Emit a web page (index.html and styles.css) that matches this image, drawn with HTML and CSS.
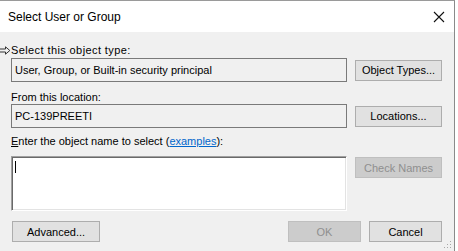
FILE: index.html
```html
<!DOCTYPE html>
<html>
<head>
<meta charset="utf-8">
<link rel="stylesheet" href="styles.css">
</head>
<body>
<div class="window">
  <div class="titlebar">
    <span class="title">Select User or Group</span>
    <svg class="close" width="12" height="12" viewBox="0 0 12 12"><path d="M1 1 L11 11 M11 1 L1 11" stroke="#111" stroke-width="1.1" fill="none"/></svg>
  </div>
  <div class="content">
    <div class="label first">
      <svg class="arrow" width="11" height="9" viewBox="0 0 11 9"><path d="M0 3 H5.5 V0.8 L9.8 4.5 L5.5 8.2 V6 H0" stroke="#333" stroke-width="1" fill="none"/></svg>
      <span class="wide">Select this object type:</span>
    </div>
    <div class="row center">
      <div class="field">User, Group, or Built-in security principal</div>
      <button class="btn">Object Types...</button>
    </div>
    <div class="label">From this location:</div>
    <div class="row center">
      <div class="field">PC-139PREETI</div>
      <button class="btn">Locations...</button>
    </div>
    <div class="label third"><u>E</u>nter the object name to select (<a class="link" href="#">examples</a>):</div>
    <div class="row top">
      <div class="textarea"><span class="caret"></span></div>
      <button class="btn disabled">Check Names</button>
    </div>
    <div class="footer">
      <button class="btn adv">Advanced...</button>
      <div class="spacer"></div>
      <button class="btn small disabled">OK</button>
      <button class="btn small">Cancel</button>
    </div>
  </div>
  <svg class="grip" width="8" height="8" viewBox="0 0 8 8">
    <rect x="6" y="0" width="1" height="1" fill="#a8a8a8"/>
    <rect x="3" y="3" width="1" height="1" fill="#a8a8a8"/>
    <rect x="6" y="3" width="1" height="1" fill="#a8a8a8"/>
    <rect x="0" y="6" width="1" height="1" fill="#a8a8a8"/>
    <rect x="3" y="6" width="1" height="1" fill="#a8a8a8"/>
    <rect x="6" y="6" width="1" height="1" fill="#a8a8a8"/>
  </svg>
</div>
</body>
</html>
```
FILE: styles.css
```css
html, body {
  margin: 0;
  padding: 0;
  background: #ffffff;
}
body {
  width: 458px;
  height: 251px;
  overflow: hidden;
  font-family: "Liberation Sans", Arial, sans-serif;
  font-size: 11px;
  color: #000;
}
.window {
  position: relative;
  width: 454px;
  height: 250px;
  border-top: 1px solid #9a9a9a;
  border-right: 1px solid #8a8a8a;
  background: #f0f0f0;
}
.titlebar {
  height: 31px;
  background: #ffffff;
  display: flex;
  align-items: center;
  padding-left: 8px;
  padding-right: 9px;
}
.title {
  font-family: "Liberation Sans", Arial, sans-serif;
  font-size: 12px;
  flex: 1;
  margin-top: 1px;
}
.close {
  display: block;
}
.content {
  padding: 11px 12px 0 11px;
}
.label {
  height: 14px;
  line-height: 14px;
  white-space: nowrap;
}
.label.first {
  display: flex;
  align-items: center;
  margin-left: -11px;
  margin-bottom: 1px;
}
.wide {
  letter-spacing: 0.4px;
}
.arrow {
  display: block;
}
.row {
  display: flex;
  gap: 8px;
}
.row.center {
  align-items: center;
  margin-bottom: 8px;
}
.row.top {
  align-items: flex-start;
  margin-bottom: 10px;
}
.field {
  box-sizing: border-box;
  width: 336px;
  height: 24px;
  line-height: 22px;
  padding-left: 3px;
  border: 1px solid #7a7a7a;
  background: #f0f0f0;
  white-space: nowrap;
}
.label.third {
  margin-top: -2px;
  margin-bottom: 8px;
}
.link {
  color: #0066cc;
  text-decoration: underline;
}
.textarea {
  position: relative;
  box-sizing: border-box;
  width: 336px;
  height: 55px;
  background: #ffffff;
  border-top: 1px solid #a0a0a0;
  border-left: 1px solid #a0a0a0;
  border-right: 1px solid #ffffff;
  border-bottom: 1px solid #ffffff;
  box-shadow: inset 1px 1px 0 #696969, inset -1px -1px 0 #e3e3e3;
}
.caret {
  position: absolute;
  left: 3px;
  top: 4px;
  width: 1px;
  height: 12px;
  background: #000;
}
.btn {
  box-sizing: border-box;
  width: 87px;
  height: 21px;
  margin: 0;
  padding: 0;
  font-family: inherit;
  font-size: 11px;
  color: #000;
  background: #e1e1e1;
  border: 1px solid #adadad;
  border-radius: 0;
}
.row.top .btn {
  margin-top: 1px;
}
.btn.disabled {
  background: #cccccc;
  border-color: #bfbfbf;
  color: #8f8f8f;
}
.footer {
  display: flex;
  align-items: center;
}
.btn.adv {
  margin-left: 1px;
  width: 88px;
}
.spacer {
  flex: 1;
}
.btn.small {
  width: 73px;
  margin-left: 8px;
}
.grip {
  position: absolute;
  right: 2px;
  bottom: 2px;
}
```
